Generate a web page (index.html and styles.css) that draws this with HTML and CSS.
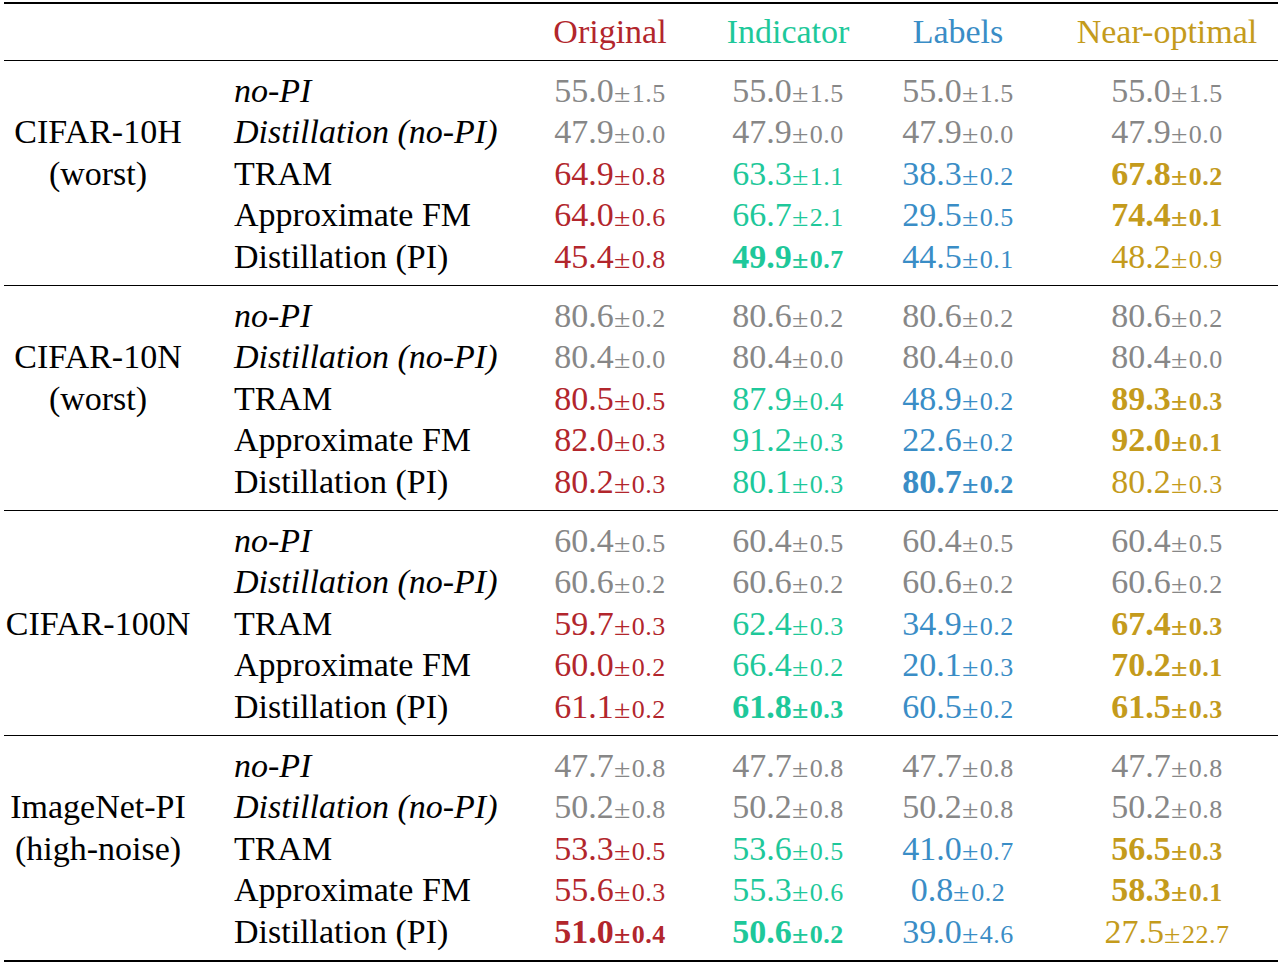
FILE: index.html
```html
<!DOCTYPE html>
<html>
<head>
<meta charset="utf-8">
<link rel="stylesheet" href="styles.css">
</head>
<body>
<table class="results">
  <colgroup>
    <col class="w1"><col class="w2"><col class="w3"><col class="w4"><col class="w5"><col class="w6">
  </colgroup>
  <thead>
    <tr>
      <th class="c1"></th><th class="c2"></th>
      <th class="c3 red">Original</th>
      <th class="c4 teal">Indicator</th>
      <th class="c5 blue">Labels</th>
      <th class="c6 gold">Near-optimal</th>
    </tr>
  </thead>
  <tbody>
    <tr class="first"><td class="c1"></td><td class="c2 it">no-PI</td>
      <td class="c3 gray">55.0<span class="pm"><span class="sg">±</span>1.5</span></td><td class="c4 gray">55.0<span class="pm"><span class="sg">±</span>1.5</span></td><td class="c5 gray">55.0<span class="pm"><span class="sg">±</span>1.5</span></td><td class="c6 gray">55.0<span class="pm"><span class="sg">±</span>1.5</span></td></tr>
    <tr><td class="c1">CIFAR-10H</td><td class="c2 it">Distillation (no-PI)</td>
      <td class="c3 gray">47.9<span class="pm"><span class="sg">±</span>0.0</span></td><td class="c4 gray">47.9<span class="pm"><span class="sg">±</span>0.0</span></td><td class="c5 gray">47.9<span class="pm"><span class="sg">±</span>0.0</span></td><td class="c6 gray">47.9<span class="pm"><span class="sg">±</span>0.0</span></td></tr>
    <tr><td class="c1">(worst)</td><td class="c2">TRAM</td>
      <td class="c3 red">64.9<span class="pm"><span class="sg">±</span>0.8</span></td><td class="c4 teal">63.3<span class="pm"><span class="sg">±</span>1.1</span></td><td class="c5 blue">38.3<span class="pm"><span class="sg">±</span>0.2</span></td><td class="c6 gold b">67.8<span class="pm"><span class="sg">±</span>0.2</span></td></tr>
    <tr><td class="c1"></td><td class="c2">Approximate FM</td>
      <td class="c3 red">64.0<span class="pm"><span class="sg">±</span>0.6</span></td><td class="c4 teal">66.7<span class="pm"><span class="sg">±</span>2.1</span></td><td class="c5 blue">29.5<span class="pm"><span class="sg">±</span>0.5</span></td><td class="c6 gold b">74.4<span class="pm"><span class="sg">±</span>0.1</span></td></tr>
    <tr class="last"><td class="c1"></td><td class="c2">Distillation (PI)</td>
      <td class="c3 red">45.4<span class="pm"><span class="sg">±</span>0.8</span></td><td class="c4 teal b">49.9<span class="pm"><span class="sg">±</span>0.7</span></td><td class="c5 blue">44.5<span class="pm"><span class="sg">±</span>0.1</span></td><td class="c6 gold">48.2<span class="pm"><span class="sg">±</span>0.9</span></td></tr>
  </tbody>
  <tbody>
    <tr class="first"><td class="c1"></td><td class="c2 it">no-PI</td>
      <td class="c3 gray">80.6<span class="pm"><span class="sg">±</span>0.2</span></td><td class="c4 gray">80.6<span class="pm"><span class="sg">±</span>0.2</span></td><td class="c5 gray">80.6<span class="pm"><span class="sg">±</span>0.2</span></td><td class="c6 gray">80.6<span class="pm"><span class="sg">±</span>0.2</span></td></tr>
    <tr><td class="c1">CIFAR-10N</td><td class="c2 it">Distillation (no-PI)</td>
      <td class="c3 gray">80.4<span class="pm"><span class="sg">±</span>0.0</span></td><td class="c4 gray">80.4<span class="pm"><span class="sg">±</span>0.0</span></td><td class="c5 gray">80.4<span class="pm"><span class="sg">±</span>0.0</span></td><td class="c6 gray">80.4<span class="pm"><span class="sg">±</span>0.0</span></td></tr>
    <tr><td class="c1">(worst)</td><td class="c2">TRAM</td>
      <td class="c3 red">80.5<span class="pm"><span class="sg">±</span>0.5</span></td><td class="c4 teal">87.9<span class="pm"><span class="sg">±</span>0.4</span></td><td class="c5 blue">48.9<span class="pm"><span class="sg">±</span>0.2</span></td><td class="c6 gold b">89.3<span class="pm"><span class="sg">±</span>0.3</span></td></tr>
    <tr><td class="c1"></td><td class="c2">Approximate FM</td>
      <td class="c3 red">82.0<span class="pm"><span class="sg">±</span>0.3</span></td><td class="c4 teal">91.2<span class="pm"><span class="sg">±</span>0.3</span></td><td class="c5 blue">22.6<span class="pm"><span class="sg">±</span>0.2</span></td><td class="c6 gold b">92.0<span class="pm"><span class="sg">±</span>0.1</span></td></tr>
    <tr class="last"><td class="c1"></td><td class="c2">Distillation (PI)</td>
      <td class="c3 red">80.2<span class="pm"><span class="sg">±</span>0.3</span></td><td class="c4 teal">80.1<span class="pm"><span class="sg">±</span>0.3</span></td><td class="c5 blue b">80.7<span class="pm"><span class="sg">±</span>0.2</span></td><td class="c6 gold">80.2<span class="pm"><span class="sg">±</span>0.3</span></td></tr>
  </tbody>
  <tbody>
    <tr class="first"><td class="c1"></td><td class="c2 it">no-PI</td>
      <td class="c3 gray">60.4<span class="pm"><span class="sg">±</span>0.5</span></td><td class="c4 gray">60.4<span class="pm"><span class="sg">±</span>0.5</span></td><td class="c5 gray">60.4<span class="pm"><span class="sg">±</span>0.5</span></td><td class="c6 gray">60.4<span class="pm"><span class="sg">±</span>0.5</span></td></tr>
    <tr><td class="c1"></td><td class="c2 it">Distillation (no-PI)</td>
      <td class="c3 gray">60.6<span class="pm"><span class="sg">±</span>0.2</span></td><td class="c4 gray">60.6<span class="pm"><span class="sg">±</span>0.2</span></td><td class="c5 gray">60.6<span class="pm"><span class="sg">±</span>0.2</span></td><td class="c6 gray">60.6<span class="pm"><span class="sg">±</span>0.2</span></td></tr>
    <tr><td class="c1">CIFAR-100N</td><td class="c2">TRAM</td>
      <td class="c3 red">59.7<span class="pm"><span class="sg">±</span>0.3</span></td><td class="c4 teal">62.4<span class="pm"><span class="sg">±</span>0.3</span></td><td class="c5 blue">34.9<span class="pm"><span class="sg">±</span>0.2</span></td><td class="c6 gold b">67.4<span class="pm"><span class="sg">±</span>0.3</span></td></tr>
    <tr><td class="c1"></td><td class="c2">Approximate FM</td>
      <td class="c3 red">60.0<span class="pm"><span class="sg">±</span>0.2</span></td><td class="c4 teal">66.4<span class="pm"><span class="sg">±</span>0.2</span></td><td class="c5 blue">20.1<span class="pm"><span class="sg">±</span>0.3</span></td><td class="c6 gold b">70.2<span class="pm"><span class="sg">±</span>0.1</span></td></tr>
    <tr class="last"><td class="c1"></td><td class="c2">Distillation (PI)</td>
      <td class="c3 red">61.1<span class="pm"><span class="sg">±</span>0.2</span></td><td class="c4 teal b">61.8<span class="pm"><span class="sg">±</span>0.3</span></td><td class="c5 blue">60.5<span class="pm"><span class="sg">±</span>0.2</span></td><td class="c6 gold b">61.5<span class="pm"><span class="sg">±</span>0.3</span></td></tr>
  </tbody>
  <tbody class="final">
    <tr class="first"><td class="c1"></td><td class="c2 it">no-PI</td>
      <td class="c3 gray">47.7<span class="pm"><span class="sg">±</span>0.8</span></td><td class="c4 gray">47.7<span class="pm"><span class="sg">±</span>0.8</span></td><td class="c5 gray">47.7<span class="pm"><span class="sg">±</span>0.8</span></td><td class="c6 gray">47.7<span class="pm"><span class="sg">±</span>0.8</span></td></tr>
    <tr><td class="c1">ImageNet-PI</td><td class="c2 it">Distillation (no-PI)</td>
      <td class="c3 gray">50.2<span class="pm"><span class="sg">±</span>0.8</span></td><td class="c4 gray">50.2<span class="pm"><span class="sg">±</span>0.8</span></td><td class="c5 gray">50.2<span class="pm"><span class="sg">±</span>0.8</span></td><td class="c6 gray">50.2<span class="pm"><span class="sg">±</span>0.8</span></td></tr>
    <tr><td class="c1">(high-noise)</td><td class="c2">TRAM</td>
      <td class="c3 red">53.3<span class="pm"><span class="sg">±</span>0.5</span></td><td class="c4 teal">53.6<span class="pm"><span class="sg">±</span>0.5</span></td><td class="c5 blue">41.0<span class="pm"><span class="sg">±</span>0.7</span></td><td class="c6 gold b">56.5<span class="pm"><span class="sg">±</span>0.3</span></td></tr>
    <tr><td class="c1"></td><td class="c2">Approximate FM</td>
      <td class="c3 red">55.6<span class="pm"><span class="sg">±</span>0.3</span></td><td class="c4 teal">55.3<span class="pm"><span class="sg">±</span>0.6</span></td><td class="c5 blue">0.8<span class="pm"><span class="sg">±</span>0.2</span></td><td class="c6 gold b">58.3<span class="pm"><span class="sg">±</span>0.1</span></td></tr>
    <tr class="last"><td class="c1"></td><td class="c2">Distillation (PI)</td>
      <td class="c3 red b">51.0<span class="pm"><span class="sg">±</span>0.4</span></td><td class="c4 teal b">50.6<span class="pm"><span class="sg">±</span>0.2</span></td><td class="c5 blue">39.0<span class="pm"><span class="sg">±</span>4.6</span></td><td class="c6 gold">27.5<span class="pm"><span class="sg">±</span>22.7</span></td></tr>
  </tbody>
</table>
</body>
</html>
```

FILE: styles.css
```css
html, body {
  margin: 0;
  padding: 0;
  background: #ffffff;
}

.results {
  margin: 2px 0 0 4px;
  width: 1274px;
  table-layout: fixed;
  border-collapse: separate;
  border-spacing: 0;
  font-family: "Liberation Serif", "Times New Roman", serif;
  font-size: 34px;
  line-height: 41.5px;
  color: #000000;
}

.w1 { width: 208px; }
.w2 { width: 308px; }
.w3 { width: 180px; }
.w4 { width: 176px; }
.w5 { width: 164px; }
.w6 { width: 238px; }

.results th,
.results td {
  padding: 0;
  white-space: nowrap;
  font-weight: normal;
  vertical-align: baseline;
}

.results thead th {
  border-top: 2px solid #000;
  border-bottom: 1px solid #000;
  padding-top: 7px;
  padding-bottom: 7px;
}

.results tbody tr.first td { padding-top: 9px; }
.results tbody tr.last td {
  padding-bottom: 7.5px;
  border-bottom: 1px solid #000;
}
.results tbody.final tr.last td {
  border-bottom: 2px solid #000;
}

.results .c1 { text-align: center; padding-right: 20px; }
.results .c2 { text-align: left; padding-left: 22px; }
.results .c3, .results .c4, .results .c5 { text-align: center; }
.results .c6 { text-align: center; padding-left: 36px; padding-right: 20px; }

.results .it { font-style: italic; }
.results .b { font-weight: bold; }

.gray { color: #878787; }
.red { color: #b2262c; }
.teal { color: #1ec89a; }
.blue { color: #3a8dc6; }
.gold { color: #c49b1c; }

.pm {
  font-size: 26px;
  line-height: 1;
  letter-spacing: 0.5px;
}

.sg {
  display: inline-block;
  margin: 0 2px 0 1px;
  transform: scaleX(1.15);
}
```
